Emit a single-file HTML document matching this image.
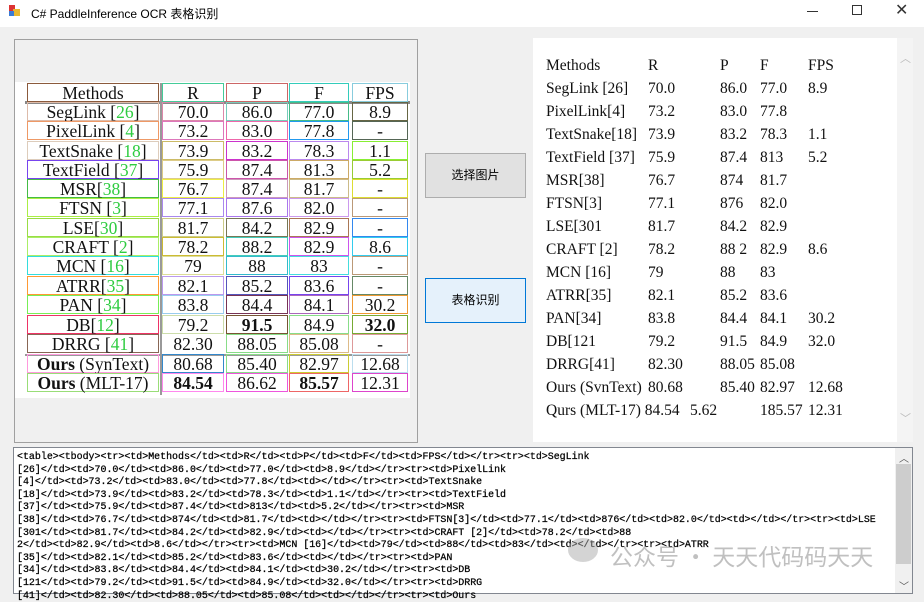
<!DOCTYPE html>
<html><head><meta charset="utf-8">
<style>
*{margin:0;padding:0;box-sizing:border-box}
body{width:924px;height:594px;background:#f0f0f0;position:relative;overflow:hidden;font-family:"Liberation Sans","Noto Sans CJK SC",sans-serif}
.title{position:absolute;left:0;top:0;width:924px;height:27px;background:#fff}
.title .t{position:absolute;left:31px;top:5px;font-size:12px;color:#000}
.ab{position:absolute}
.pic{position:absolute;left:14px;top:39px;width:404px;height:404px;border:1px solid #a0a0a0;background:#f0f0f0}
.img{position:absolute;left:15px;top:82px;width:395px;height:316px;background:#fff}
.row{position:absolute;left:0;height:19px;font-family:"Liberation Serif",serif;font-size:17.5px;line-height:19px;color:#111;width:924px}
.row span{position:absolute;top:0;height:19px;text-align:center;border:1.5px solid #ccc;white-space:nowrap}
.c0{left:27px;width:132px}.c1{left:162px;width:62px}.c2{left:226px;width:62px}.c3{left:289px;width:60px}.c4{left:352px;width:56px}
.g{color:#2ecc40}
.btn{position:absolute;left:425px;width:101px;height:45px;border:1px solid #adadad;background:#e1e1e1;font-size:12px;text-align:center;line-height:43px;color:#000}
.rp{position:absolute;left:533px;top:38px;width:364px;height:404px;background:#fff}
.rsb{position:absolute;left:897px;top:38px;width:16px;height:404px;background:#f4f4f4}
.rr{position:absolute;font-family:"Liberation Serif",serif;font-size:15.5px;color:#111;white-space:nowrap}
.tb{position:absolute;left:13px;top:447px;width:900px;height:147px;background:#fff;border:1px solid #828790}
.mono{position:absolute;left:3px;top:3px;font-family:"Liberation Mono","Noto Sans CJK SC",monospace;font-size:9.95px;line-height:12.6px;color:#000;white-space:pre;-webkit-text-stroke:0.25px #000}
.sb{position:absolute;right:0;top:0;width:17px;height:145px;background:#f0f0f0}
</style></head><body>
<div class="title">
<div class="ab" style="left:9px;top:5px;width:6px;height:6px;background:#d33"></div>
<div class="ab" style="left:13px;top:9px;width:7px;height:7px;background:#e8b830"></div>
<div class="ab" style="left:9px;top:11px;width:5px;height:5px;background:#3a7bd5"></div>
<div class="t">C# PaddleInference OCR 表格识别</div>
<div class="ab" style="left:807px;top:11px;width:11px;height:1px;background:#333"></div>
<div class="ab" style="left:852px;top:5px;width:10px;height:10px;border:1px solid #333"></div>
<div class="ab" style="left:895px;top:0px;font-size:16px;color:#333">✕</div>
</div>

<div class="pic"></div>
<div class="img"></div>
<div class="ab" style="left:25px;top:101px;width:385px;height:3px;background:#888"></div>
<div class="ab" style="left:25px;top:354px;width:385px;height:2px;background:#999"></div>
<div class="ab" style="left:160px;top:83px;width:2px;height:312px;background:#999"></div>

<div class="row" style="top:83px"><span class="c0" style="border-color:#8b5a3c">Methods</span><span class="c1" style="border-color:#4c9">R</span><span class="c2" style="border-color:#c66">P</span><span class="c3" style="border-color:#3cb">F</span><span class="c4" style="border-color:#8cd">FPS</span></div>
<div class="row" style="top:102px"><span class="c0" style="border-color:#dba">SegLink [<i class="g" style="font-style:normal">26</i>]</span><span class="c1" style="border-color:#d8a">70.0</span><span class="c2" style="border-color:#7cb">86.0</span><span class="c3" style="border-color:#4b8">77.0</span><span class="c4" style="border-color:#664">8.9</span></div>
<div class="row" style="top:121px"><span class="c0" style="border-color:#e96">PixelLink [<i class="g" style="font-style:normal">4</i>]</span><span class="c1" style="border-color:#d7b">73.2</span><span class="c2" style="border-color:#e6a">83.0</span><span class="c3" style="border-color:#29e">77.8</span><span class="c4" style="border-color:#565">-</span></div>
<div class="row" style="top:141px"><span class="c0" style="border-color:#dcb">TextSnake [<i class="g" style="font-style:normal">18</i>]</span><span class="c1" style="border-color:#cb6">73.9</span><span class="c2" style="border-color:#c3c">83.2</span><span class="c3" style="border-color:#b8e">78.3</span><span class="c4" style="border-color:#8e3">1.1</span></div>
<div class="row" style="top:160px"><span class="c0" style="border-color:#74e">TextField [<i class="g" style="font-style:normal">37</i>]</span><span class="c1" style="border-color:#dc8">75.9</span><span class="c2" style="border-color:#c5a">87.4</span><span class="c3" style="border-color:#ca6">81.3</span><span class="c4" style="border-color:#9c3">5.2</span></div>
<div class="row" style="top:179px"><span class="c0" style="border-color:#4b4">MSR[<i class="g" style="font-style:normal">38</i>]</span><span class="c1" style="border-color:#ee4">76.7</span><span class="c2" style="border-color:#c9b">87.4</span><span class="c3" style="border-color:#cb8">81.7</span><span class="c4" style="border-color:#dd3">-</span></div>
<div class="row" style="top:198px"><span class="c0" style="border-color:#ae4">FTSN [<i class="g" style="font-style:normal">3</i>]</span><span class="c1" style="border-color:#a8e">77.1</span><span class="c2" style="border-color:#a7e">87.6</span><span class="c3" style="border-color:#c9e">82.0</span><span class="c4" style="border-color:#b97">-</span></div>
<div class="row" style="top:218px"><span class="c0" style="border-color:#9d4">LSE[<i class="g" style="font-style:normal">30</i>]</span><span class="c1" style="border-color:#cc8">81.7</span><span class="c2" style="border-color:#775">84.2</span><span class="c3" style="border-color:#a75">82.9</span><span class="c4" style="border-color:#38e">-</span></div>
<div class="row" style="top:237px"><span class="c0" style="border-color:#ae6">CRAFT [<i class="g" style="font-style:normal">2</i>]</span><span class="c1" style="border-color:#cb3">78.2</span><span class="c2" style="border-color:#4cb">88.2</span><span class="c3" style="border-color:#c5e">82.9</span><span class="c4" style="border-color:#3ce">8.6</span></div>
<div class="row" style="top:256px"><span class="c0" style="border-color:#3dd">MCN [<i class="g" style="font-style:normal">16</i>]</span><span class="c1" style="border-color:#dd9">79</span><span class="c2" style="border-color:#3bc">88</span><span class="c3" style="border-color:#4dd">83</span><span class="c4" style="border-color:#b97">-</span></div>
<div class="row" style="top:276px"><span class="c0" style="border-color:#f93">ATRR[<i class="g" style="font-style:normal">35</i>]</span><span class="c1" style="border-color:#b9e">82.1</span><span class="c2" style="border-color:#55b">85.2</span><span class="c3" style="border-color:#74e">83.6</span><span class="c4" style="border-color:#686">-</span></div>
<div class="row" style="top:295px"><span class="c0" style="border-color:#7e5">PAN [<i class="g" style="font-style:normal">34</i>]</span><span class="c1" style="border-color:#9ce">83.8</span><span class="c2" style="border-color:#735">84.4</span><span class="c3" style="border-color:#a6b">84.1</span><span class="c4" style="border-color:#e93">30.2</span></div>
<div class="row" style="top:315px"><span class="c0" style="border-color:#e36">DB[<i class="g" style="font-style:normal">12</i>]</span><span class="c1" style="border-color:#cda">79.2</span><span class="c2" style="border-color:#753"><b>91.5</b></span><span class="c3" style="border-color:#8d8">84.9</span><span class="c4" style="border-color:#7a3"><b>32.0</b></span></div>
<div class="row" style="top:334px"><span class="c0" style="border-color:#865">DRRG [<i class="g" style="font-style:normal">41</i>]</span><span class="c1" style="border-color:#fff">82.30</span><span class="c2" style="border-color:#8d8">88.05</span><span class="c3" style="border-color:#db8">85.08</span><span class="c4" style="border-color:#d99">-</span></div>
<div class="row" style="top:354px"><span class="c0" style="border-color:#f9d"><b>Ours</b> (SynText)</span><span class="c1" style="border-color:#38c">80.68</span><span class="c2" style="border-color:#8d8">85.40</span><span class="c3" style="border-color:#cc3">82.97</span><span class="c4" style="border-color:#bde">12.68</span></div>
<div class="row" style="top:373px"><span class="c0" style="border-color:#9d7"><b>Ours</b> (MLT-17)</span><span class="c1" style="border-color:#f8e"><b>84.54</b></span><span class="c2" style="border-color:#e5d">86.62</span><span class="c3" style="border-color:#e66"><b>85.57</b></span><span class="c4" style="border-color:#d4c">12.31</span></div>

<div class="btn" style="top:153px">选择图片</div>
<div class="btn" style="top:278px;background:#e5f1fb;border-color:#0078d7">表格识别</div>

<div class="rp"></div>
<div class="rsb"><div class="ab" style="left:3px;top:12px;font-size:11px;color:#bbb">︿</div><div class="ab" style="left:3px;top:372px;font-size:11px;color:#bbb">﹀</div></div>
<div class="rr" style="left:546px;top:57px">Methods</div><div class="rr" style="left:648px;top:57px">R</div><div class="rr" style="left:720px;top:57px">P</div><div class="rr" style="left:760px;top:57px">F</div><div class="rr" style="left:808px;top:57px">FPS</div>
<div class="rr" style="left:546px;top:80px">SegLink [26]</div><div class="rr" style="left:648px;top:80px">70.0</div><div class="rr" style="left:720px;top:80px">86.0</div><div class="rr" style="left:760px;top:80px">77.0</div><div class="rr" style="left:808px;top:80px">8.9</div>
<div class="rr" style="left:546px;top:103px">PixelLink[4]</div><div class="rr" style="left:648px;top:103px">73.2</div><div class="rr" style="left:720px;top:103px">83.0</div><div class="rr" style="left:760px;top:103px">77.8</div>
<div class="rr" style="left:546px;top:126px">TextSnake[18]</div><div class="rr" style="left:648px;top:126px">73.9</div><div class="rr" style="left:720px;top:126px">83.2</div><div class="rr" style="left:760px;top:126px">78.3</div><div class="rr" style="left:808px;top:126px">1.1</div>
<div class="rr" style="left:546px;top:149px">TextField [37]</div><div class="rr" style="left:648px;top:149px">75.9</div><div class="rr" style="left:720px;top:149px">87.4</div><div class="rr" style="left:760px;top:149px">813</div><div class="rr" style="left:808px;top:149px">5.2</div>
<div class="rr" style="left:546px;top:172px">MSR[38]</div><div class="rr" style="left:648px;top:172px">76.7</div><div class="rr" style="left:720px;top:172px">874</div><div class="rr" style="left:760px;top:172px">81.7</div>
<div class="rr" style="left:546px;top:195px">FTSN[3]</div><div class="rr" style="left:648px;top:195px">77.1</div><div class="rr" style="left:720px;top:195px">876</div><div class="rr" style="left:760px;top:195px">82.0</div>
<div class="rr" style="left:546px;top:218px">LSE[301</div><div class="rr" style="left:648px;top:218px">81.7</div><div class="rr" style="left:720px;top:218px">84.2</div><div class="rr" style="left:760px;top:218px">82.9</div>
<div class="rr" style="left:546px;top:241px">CRAFT [2]</div><div class="rr" style="left:648px;top:241px">78.2</div><div class="rr" style="left:720px;top:241px">88 2</div><div class="rr" style="left:760px;top:241px">82.9</div><div class="rr" style="left:808px;top:241px">8.6</div>
<div class="rr" style="left:546px;top:264px">MCN [16]</div><div class="rr" style="left:648px;top:264px">79</div><div class="rr" style="left:720px;top:264px">88</div><div class="rr" style="left:760px;top:264px">83</div>
<div class="rr" style="left:546px;top:287px">ATRR[35]</div><div class="rr" style="left:648px;top:287px">82.1</div><div class="rr" style="left:720px;top:287px">85.2</div><div class="rr" style="left:760px;top:287px">83.6</div>
<div class="rr" style="left:546px;top:310px">PAN[34]</div><div class="rr" style="left:648px;top:310px">83.8</div><div class="rr" style="left:720px;top:310px">84.4</div><div class="rr" style="left:760px;top:310px">84.1</div><div class="rr" style="left:808px;top:310px">30.2</div>
<div class="rr" style="left:546px;top:333px">DB[121</div><div class="rr" style="left:648px;top:333px">79.2</div><div class="rr" style="left:720px;top:333px">91.5</div><div class="rr" style="left:760px;top:333px">84.9</div><div class="rr" style="left:808px;top:333px">32.0</div>
<div class="rr" style="left:546px;top:356px">DRRG[41]</div><div class="rr" style="left:648px;top:356px">82.30</div><div class="rr" style="left:720px;top:356px">88.05</div><div class="rr" style="left:760px;top:356px">85.08</div>
<div class="rr" style="left:546px;top:379px">Ours (SvnText)</div><div class="rr" style="left:648px;top:379px">80.68</div><div class="rr" style="left:720px;top:379px">85.40</div><div class="rr" style="left:760px;top:379px">82.97</div><div class="rr" style="left:808px;top:379px">12.68</div>
<div class="rr" style="left:546px;top:402px">Qurs (MLT-17) 84.54</div><div class="rr" style="left:690px;top:402px">5.62</div><div class="rr" style="left:760px;top:402px">185.57</div><div class="rr" style="left:808px;top:402px">12.31</div>

<div class="tb">
<div class="mono">&lt;table&gt;&lt;tbody&gt;&lt;tr&gt;&lt;td&gt;Methods&lt;/td&gt;&lt;td&gt;R&lt;/td&gt;&lt;td&gt;P&lt;/td&gt;&lt;td&gt;F&lt;/td&gt;&lt;td&gt;FPS&lt;/td&gt;&lt;/tr&gt;&lt;tr&gt;&lt;td&gt;SegLink
[26]&lt;/td&gt;&lt;td&gt;70.0&lt;/td&gt;&lt;td&gt;86.0&lt;/td&gt;&lt;td&gt;77.0&lt;/td&gt;&lt;td&gt;8.9&lt;/td&gt;&lt;/tr&gt;&lt;tr&gt;&lt;td&gt;PixelLink
[4]&lt;/td&gt;&lt;td&gt;73.2&lt;/td&gt;&lt;td&gt;83.0&lt;/td&gt;&lt;td&gt;77.8&lt;/td&gt;&lt;td&gt;&lt;/td&gt;&lt;/tr&gt;&lt;tr&gt;&lt;td&gt;TextSnake
[18]&lt;/td&gt;&lt;td&gt;73.9&lt;/td&gt;&lt;td&gt;83.2&lt;/td&gt;&lt;td&gt;78.3&lt;/td&gt;&lt;td&gt;1.1&lt;/td&gt;&lt;/tr&gt;&lt;tr&gt;&lt;td&gt;TextField
[37]&lt;/td&gt;&lt;td&gt;75.9&lt;/td&gt;&lt;td&gt;87.4&lt;/td&gt;&lt;td&gt;813&lt;/td&gt;&lt;td&gt;5.2&lt;/td&gt;&lt;/tr&gt;&lt;tr&gt;&lt;td&gt;MSR
[38]&lt;/td&gt;&lt;td&gt;76.7&lt;/td&gt;&lt;td&gt;874&lt;/td&gt;&lt;td&gt;81.7&lt;/td&gt;&lt;td&gt;&lt;/td&gt;&lt;/tr&gt;&lt;tr&gt;&lt;td&gt;FTSN[3]&lt;/td&gt;&lt;td&gt;77.1&lt;/td&gt;&lt;td&gt;876&lt;/td&gt;&lt;td&gt;82.0&lt;/td&gt;&lt;td&gt;&lt;/td&gt;&lt;/tr&gt;&lt;tr&gt;&lt;td&gt;LSE
[301&lt;/td&gt;&lt;td&gt;81.7&lt;/td&gt;&lt;td&gt;84.2&lt;/td&gt;&lt;td&gt;82.9&lt;/td&gt;&lt;td&gt;&lt;/td&gt;&lt;/tr&gt;&lt;tr&gt;&lt;td&gt;CRAFT [2]&lt;/td&gt;&lt;td&gt;78.2&lt;/td&gt;&lt;td&gt;88
2&lt;/td&gt;&lt;td&gt;82.9&lt;/td&gt;&lt;td&gt;8.6&lt;/td&gt;&lt;/tr&gt;&lt;tr&gt;&lt;td&gt;MCN [16]&lt;/td&gt;&lt;td&gt;79&lt;/td&gt;&lt;td&gt;88&lt;/td&gt;&lt;td&gt;83&lt;/td&gt;&lt;td&gt;&lt;/td&gt;&lt;/tr&gt;&lt;tr&gt;&lt;td&gt;ATRR
[35]&lt;/td&gt;&lt;td&gt;82.1&lt;/td&gt;&lt;td&gt;85.2&lt;/td&gt;&lt;td&gt;83.6&lt;/td&gt;&lt;td&gt;&lt;/td&gt;&lt;/tr&gt;&lt;tr&gt;&lt;td&gt;PAN
[34]&lt;/td&gt;&lt;td&gt;83.8&lt;/td&gt;&lt;td&gt;84.4&lt;/td&gt;&lt;td&gt;84.1&lt;/td&gt;&lt;td&gt;30.2&lt;/td&gt;&lt;/tr&gt;&lt;tr&gt;&lt;td&gt;DB
[121&lt;/td&gt;&lt;td&gt;79.2&lt;/td&gt;&lt;td&gt;91.5&lt;/td&gt;&lt;td&gt;84.9&lt;/td&gt;&lt;td&gt;32.0&lt;/td&gt;&lt;/tr&gt;&lt;tr&gt;&lt;td&gt;DRRG
[41]&lt;/td&gt;&lt;td&gt;82.30&lt;/td&gt;&lt;td&gt;88.05&lt;/td&gt;&lt;td&gt;85.08&lt;/td&gt;&lt;td&gt;&lt;/td&gt;&lt;/tr&gt;&lt;tr&gt;&lt;td&gt;Ours</div>
<div class="sb"><div class="ab" style="left:4px;top:2px;font-size:10px;color:#555">︿</div><div class="ab" style="left:1px;top:16px;width:15px;height:100px;background:#cdcdcd"></div><div class="ab" style="left:4px;top:130px;font-size:10px;color:#555">﹀</div></div>
</div>
<div class="ab" style="left:568px;top:538px;width:30px;height:24px;border-radius:50%;background:rgba(170,170,170,0.5)"></div>
<div class="ab" style="left:610px;top:538px;font-size:23px;color:rgba(150,150,150,0.6);font-family:'Noto Sans CJK SC',sans-serif;white-space:nowrap">公众号 · 天天代码码天天</div>
</body></html>
